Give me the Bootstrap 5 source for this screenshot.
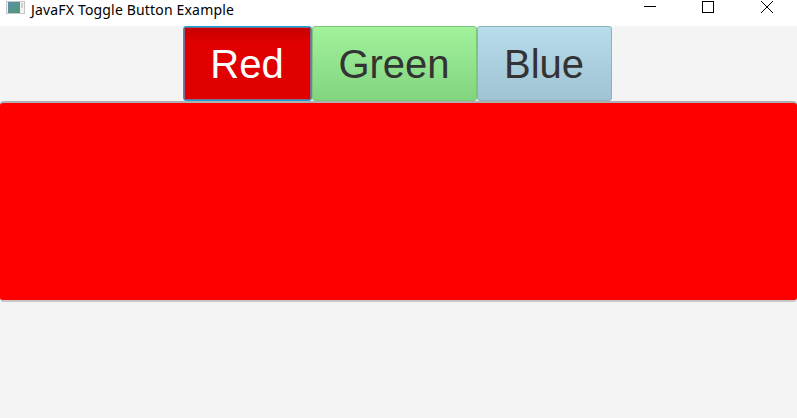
<!DOCTYPE html>
<html lang="en">
<head>
<meta charset="utf-8">
<title>JavaFX Toggle Button Example</title>
<link href="https://cdn.jsdelivr.net/npm/bootstrap@5.3.0/dist/css/bootstrap.min.css" rel="stylesheet">
<style>
html,body{height:418px;overflow:hidden;background:#f4f4f4}
.win-title{height:26px;background:#fff;font-family:"Noto Sans","Open Sans",sans-serif;font-size:14px;color:#000;line-height:19px}
.win-name{letter-spacing:.17px}
.win-logo{width:19px;height:13px;margin:1px 6px 0 6px}
.win-ctl{width:58px;height:26px}
.win-ctl path,.win-ctl rect{stroke:#000;fill:none}
.tog-row{height:75px;padding-right:2px}
.tog{font-family:"Liberation Sans",Arial,sans-serif;font-size:40px;line-height:1;height:75px;padding:1px 1px 0 0;border:1px solid;border-radius:3px;color:#333}
.tog-red{width:129px;color:#fff;background:linear-gradient(#c40000,#e00000 22%,#e00000);border-color:#12a5dc;box-shadow:inset 0 0 0 1px #7a6a90}
.tog-green{width:165px;background:linear-gradient(#a2f29c,#82d47e);border-color:#7cc47a}
.tog-blue{width:135px;background:linear-gradient(#b7dcea,#9fc3d3);border-color:#8fb0bf}
.color-pane{height:201px;background:#f00;border:solid #b0b0b0;border-width:2px 0;border-bottom-color:#c6c6c6;border-radius:4px}
</style>
</head>
<body>
<div class="win-title d-flex align-items-start">
  <svg class="win-logo flex-shrink-0" viewBox="0 0 19 13">
    <defs><linearGradient id="lg" x1="0" y1="0" x2="1" y2="1"><stop offset="0" stop-color="#5b8fb0"/><stop offset="1" stop-color="#4f9a6e"/></linearGradient></defs>
    <rect x=".5" y=".5" width="18" height="12" fill="#f2f2f2" stroke="#c4c4c4"/>
    <rect x="2" y="1" width="12" height="11" fill="url(#lg)"/>
    <rect x="15" y="2" width="2" height="5" fill="#d0d0d0"/>
  </svg>
  <span class="win-name flex-grow-1">JavaFX Toggle Button Example</span>
  <div class="d-flex">
    <svg class="win-ctl" viewBox="0 0 58 26"><path d="M21 6.5H33"/></svg>
    <svg class="win-ctl" viewBox="0 0 58 26"><rect x="21.5" y="1.5" width="11" height="11"/></svg>
    <svg class="win-ctl" viewBox="0 0 58 26"><path d="M22 1L34 13M34 1L22 13"/></svg>
  </div>
</div>
<div class="tog-row d-flex justify-content-center">
  <button type="button" class="btn tog tog-red">Red</button>
  <button type="button" class="btn tog tog-green">Green</button>
  <button type="button" class="btn tog tog-blue">Blue</button>
</div>
<div class="color-pane"></div>
<script src="https://cdn.jsdelivr.net/npm/bootstrap@5.3.0/dist/js/bootstrap.bundle.min.js"></script>
</body>
</html>
